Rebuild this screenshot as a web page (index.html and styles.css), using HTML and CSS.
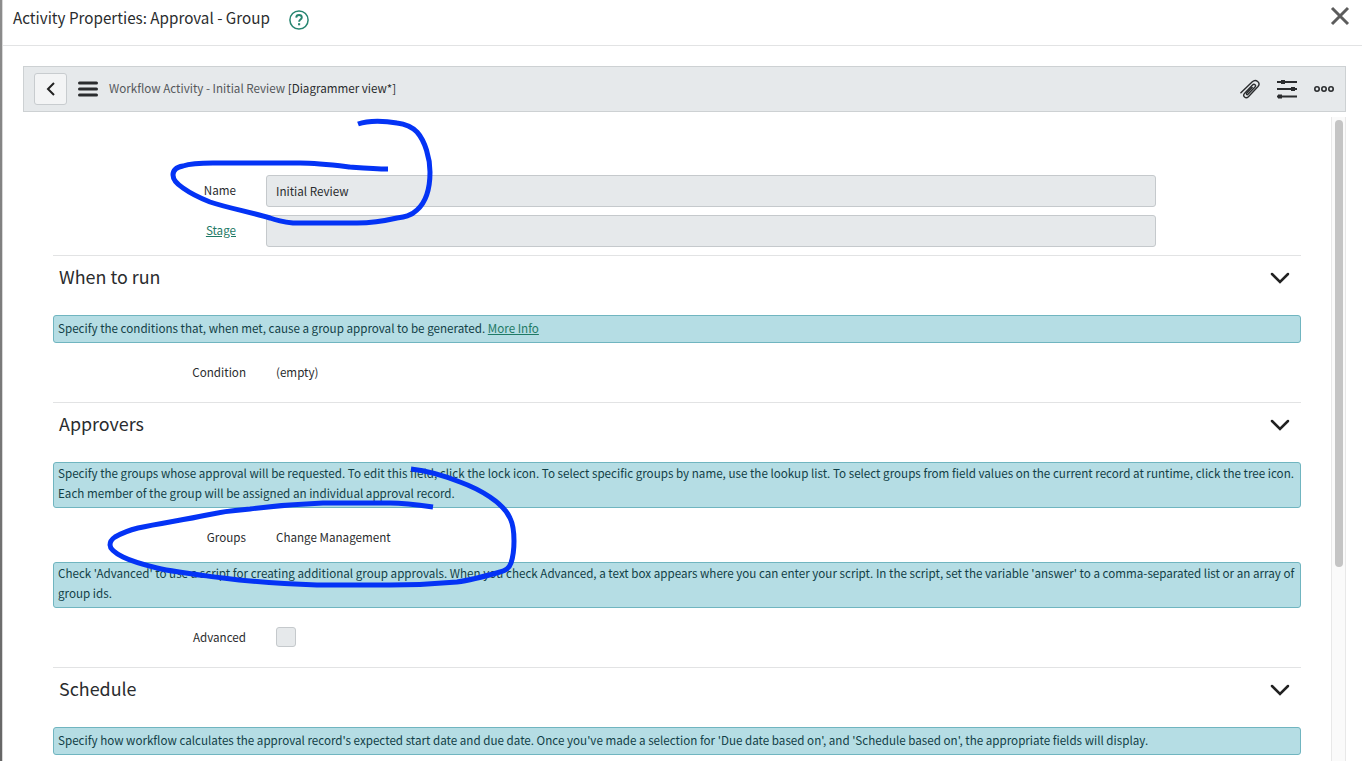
FILE: index.html
```html
<!DOCTYPE html>
<html lang="en">
<head>
    <meta charset="UTF-8">
    <meta name="viewport" content="width=device-width, initial-scale=1.0">
    <title>Activity Properties: Approval - Group</title>
    <link rel="stylesheet" href="styles.css">
</head>
<body>
    <div class="dialog">
        <header class="dialog-header">
            <h1>Activity Properties: Approval - Group</h1>
            <a href="#" class="help" aria-label="Help">
                <svg width="20" height="20" viewBox="0 0 20 20" fill="none" stroke="#278570">
                    <circle cx="10" cy="10" r="9.1" stroke-width="1.5"/>
                    <path d="M7.2 7.6C7.3 5.9 8.5 5 10 5c1.600 0 2.800 1 2.800 2.500 0 2-2.700 2.100-2.700 4.200" stroke-width="1.900"/>
                    <path d="M10.100 13.200v2.100" stroke-width="2.100"/>
                </svg>
            </a>
            <button type="button" class="close" aria-label="Close">
                <svg width="20" height="20" viewBox="0 0 20 20" stroke="#5c5c5c" stroke-width="3">
                    <path d="M2 2l16 16M18 2L2 18"/>
                </svg>
            </button>
        </header>

        <div class="toolbar">
            <button type="button" class="back" aria-label="Back">
                <svg width="10" height="14" viewBox="0 0 10 14" fill="none" stroke="#222" stroke-width="2">
                    <path d="M8 1L2 7l6 6"/>
                </svg>
            </button>
            <button type="button" class="menu" aria-label="Menu">
                <svg width="20" height="16" viewBox="0 0 20 16" stroke="#2a2c2e" stroke-width="3" stroke-linecap="round">
                    <path d="M1.500 2h17M1.500 8h17M1.500 14h17"/>
                </svg>
            </button>
            <h2><span>Workflow Activity - Initial Review</span> [Diagrammer view*]</h2>
            <div class="actions">
                <button type="button" aria-label="Attachments">
                    <svg width="20" height="20" viewBox="0 0 20 20" fill="none" stroke="#2a2c2e" stroke-width="1.400" stroke-linecap="round">
                        <path d="M.9 13.800L12.300 2.800c3.600-3.300 8.800.900 5.700 4.700L8.400 17.800c-2.700 2.500-6.200-.7-3.900-3.400l8-8.400c1.900-1.700 4 .3 2.500 2.100l-7 7.200c-1 .9-2.100-.2-1.200-1.200l5.400-5.700"/>
                    </svg>
                </button>
                <button type="button" aria-label="Personalize form">
                    <svg width="20" height="20" viewBox="0 0 20 20" stroke="#2a2c2e">
                        <path d="M0 3h20M0 10h20M0 17.500h20" stroke-width="1.800"/>
                        <path d="M6 1v4M16 8v4M3 15.500v4" stroke-width="4"/>
                    </svg>
                </button>
                <button type="button" aria-label="More options">
                    <svg width="20" height="8" viewBox="0 0 20 8" fill="none" stroke="#2a2c2e" stroke-width="1.600">
                        <circle cx="3" cy="4" r="2.200"/>
                        <circle cx="10" cy="4" r="2.200"/>
                        <circle cx="17" cy="4" r="2.200"/>
                    </svg>
                </button>
            </div>
        </div>

        <div class="form-area">
            <form class="form">
                <div class="fields">
                    <div class="field">
                        <label for="name">Name</label>
                        <input type="text" id="name" value="Initial Review" readonly>
                    </div>
                    <div class="field">
                        <label for="stage"><a href="#">Stage</a></label>
                        <input type="text" id="stage" readonly>
                    </div>
                </div>

                <section>
                    <div class="section-header">
                        <h3>When to run</h3>
                        <button type="button" aria-label="Collapse When to run">
                            <svg width="20" height="12" viewBox="0 0 20 12" fill="none" stroke="#222" stroke-width="2.500" stroke-linecap="round">
                                <path d="M2 2l8 8 8-8"/>
                            </svg>
                        </button>
                    </div>
                    <p class="info">Specify the conditions that, when met, cause a group approval to be generated. <a href="#">More Info</a></p>
                    <div class="row">
                        <span class="row-label">Condition</span>
                        <span>(empty)</span>
                    </div>
                </section>

                <section>
                    <div class="section-header">
                        <h3>Approvers</h3>
                        <button type="button" aria-label="Collapse Approvers">
                            <svg width="20" height="12" viewBox="0 0 20 12" fill="none" stroke="#222" stroke-width="2.500" stroke-linecap="round">
                                <path d="M2 2l8 8 8-8"/>
                            </svg>
                        </button>
                    </div>
                    <p class="info info-long">Specify the groups whose approval will be requested. To edit this field, click the lock icon. To select specific groups by name, use the lookup list. To select groups from field values on the current record at runtime, click the tree icon. Each member of the group will be assigned an individual approval record.</p>
                    <div class="row">
                        <span class="row-label">Groups</span>
                        <span>Change Management</span>
                    </div>
                    <p class="info info-long">Check 'Advanced' to use a script for creating additional group approvals. When you check Advanced, a text box appears where you can enter your script. In the script, set the variable 'answer' to a comma-separated list or an array of group ids.</p>
                    <div class="row">
                        <label class="row-label" for="advanced">Advanced</label>
                        <input type="checkbox" id="advanced">
                    </div>
                </section>

                <section>
                    <div class="section-header">
                        <h3>Schedule</h3>
                        <button type="button" aria-label="Collapse Schedule">
                            <svg width="20" height="12" viewBox="0 0 20 12" fill="none" stroke="#222" stroke-width="2.500" stroke-linecap="round">
                                <path d="M2 2l8 8 8-8"/>
                            </svg>
                        </button>
                    </div>
                    <p class="info">Specify how workflow calculates the approval record's expected start date and due date. Once you've made a selection for 'Due date based on', and 'Schedule based on', the appropriate fields will display.</p>
                </section>
            </form>
            <div class="scrollbar" aria-hidden="true">
                <div class="thumb"></div>
            </div>
        </div>
    </div>

    <!-- hand-drawn highlights over the form -->
    <svg class="marks" width="540" height="600" viewBox="0 0 540 600" fill="none" stroke="#0433f5" stroke-width="5" stroke-linejoin="round">
        <path d="M358 124C369 120 386 121 397 123C405 124 412 127 417 132C425 141 430 158 430 172C430 187 426 202 417 210C411 216 404 217 397 218C384 221 371 223 357 223H293C285 222 278 221 270 218C250 212 228 208 210 202C200 198 190 193 183 188C177 184 173 179 173 175C173 170 177 167 183 166C192 163 203 163 213 163H300C317 163 333 165 350 167C363 168 375 169 388 169"/>
        <path d="M411 469C429 471 445 476 460 482C471 486 481 491 490 497C499 503 506 509 510 518C514 526 514 534 514 541C514 548 513 557 511 563C509 569 505 571 500 572C486 576 472 580 457 582C435 584 412 585 390 585H317C285 584 254 582 223 578C201 575 179 573 157 568C145 565 133 562 123 557C115 553 110 549 110 545C110 541 112 539 115 537C122 533 130 530 138 528C161 523 184 520 207 515C221 512 235 510 250 509C274 506 299 504 323 503H390C405 503 419 505 433 507"/>
    </svg>
</body>
</html>
```
FILE: styles.css
```css
* {
    box-sizing: border-box;
}
body {
    margin: 0;
    background: linear-gradient(#8c8c8c, #666);
    font-family: "Noto Sans CJK SC", "Open Sans", sans-serif;
    font-size: 13px;
    font-size-adjust: 0.486;
    line-height: 20px;
    color: #2a2c2e;
}
h1, h2, h3, p {
    margin: 0;
    font-weight: normal;
}
button {
    display: flex;
    align-items: center;
    justify-content: center;
    padding: 0;
    border: none;
    background: none;
    cursor: pointer;
}
a {
    color: #1f7a66;
}
.dialog {
    display: flex;
    flex-direction: column;
    height: 100vh;
    margin-left: 2px;
    background-color: #fff;
    border-left: 1px solid #d8d8d8;
}
.dialog-header {
    display: flex;
    align-items: center;
    flex-shrink: 0;
    height: 46px;
    padding: 0 12px 10px 10px;
    border-bottom: 1px solid #e2e3e4;
}
.dialog-header h1 {
    padding-bottom: 2px;
    font-size: 17px;
}
.help {
    display: flex;
    margin: 4px 0 0 19px;
}
.close {
    margin: 0 0 4px auto;
}
.toolbar {
    display: flex;
    align-items: center;
    flex-shrink: 0;
    height: 46px;
    margin: 20px 16px 5px 20px;
    padding: 0 11px 0 10px;
    background-color: #e6e9eb;
    border: 1px solid #cdd1d3;
}
.toolbar h2 {
    padding-bottom: 2px;
    font-size: 13px;
}
.toolbar h2 span {
    color: #55585b;
}
.back {
    width: 33px;
    height: 32px;
    background-color: #f3f4f5;
    border: 1px solid #c8cccf;
    border-radius: 3px;
}
.menu {
    margin: 0 11px;
}
.actions {
    display: flex;
    align-items: center;
    gap: 17px;
    margin-left: auto;
}
.form-area {
    display: flex;
    flex: 1;
    min-height: 0;
    margin: 0 16px 0 20px;
}
.form {
    flex: 1;
    overflow-y: auto;
    scrollbar-width: none;
    padding: 0 30px;
}
.scrollbar {
    width: 15px;
    padding: 3px;
    background-color: #fafafa;
    border: solid #e8e8e8;
    border-width: 0 1px;
}
.thumb {
    height: 70%;
    width: 8px;
    margin: 0 auto;
    background-color: #c4c4c4;
    border-radius: 4px;
}
.fields {
    display: grid;
    gap: 8px;
    padding: 58px 0 8px;
}
.field {
    display: grid;
    grid-template-columns: 183px 1fr;
    gap: 30px;
    align-items: center;
    padding-right: 145px;
}
.field label {
    padding-bottom: 2px;
    text-align: right;
}
.field input {
    width: 100%;
    height: 32px;
    padding: 0 9px;
    font: inherit;
    font-size-adjust: inherit;
    color: inherit;
    background-color: #e6e9eb;
    border: 1px solid #c5c9cc;
    border-radius: 3px;
}
section {
    padding-bottom: 5px;
    border-top: 1px solid #e2e3e4;
}
.section-header {
    display: flex;
    align-items: center;
    justify-content: space-between;
    height: 44px;
    margin-bottom: 15px;
    padding: 0 11px 0 6px;
}
.section-header h3 {
    padding-bottom: 4px;
    font-size: 20px;
}
.info {
    padding: 2px 4px 4px;
    color: #123f47;
    background-color: #b5dde4;
    border: 1px solid #70b5c0;
    border-radius: 3px;
}
.info-long {
    padding-top: 0;
}
.row {
    display: grid;
    grid-template-columns: 193px 1fr;
    gap: 30px;
    align-items: center;
    height: 30px;
    margin: 14px 0 10px;
}
.row-label {
    text-align: right;
}
.row input {
    appearance: none;
    width: 20px;
    height: 20px;
    margin: 0;
    background-color: #e6e9eb;
    border: 1px solid #c5c9cc;
    border-radius: 3px;
}
.marks {
    position: absolute;
    top: 0;
    left: 0;
    pointer-events: none;
}
```
